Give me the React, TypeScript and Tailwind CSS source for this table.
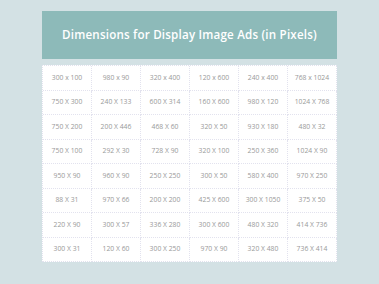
const rows: string[][] = [
  ["300 x 100", "980 x 90", "320 x 400", "120 x 600", "240 x 400", "768 x 1024"],
  ["750 X 300", "240 X 133", "600 X 314", "160 X 600", "980 X 120", "1024 X 768"],
  ["750 X 200", "200 X 446", "468 X 60", "320 X 50", "930 X 180", "480 X 32"],
  ["750 X 100", "292 X 30", "728 X 90", "320 X 100", "250 X 360", "1024 X 90"],
  ["950 X 90", "960 X 90", "250 X 250", "300 X 50", "580 X 400", "970 X 250"],
  ["88 X 31", "970 X 66", "200 X 200", "425 X 600", "300 X 1050", "375 X 50"],
  ["220 X 90", "300 X 57", "336 X 280", "300 X 600", "480 X 320", "414 X 736"],
  ["300 X 31", "120 X 60", "300 X 250", "970 X 90", "320 X 480", "736 X 414"],
];

export default function App() {
  return (
    <div
      className="w-[379px] h-[284px] bg-[#d3e1e4] flex justify-center pt-[11px]"
      style={{ fontFamily: '"Open Sans", "Liberation Sans", sans-serif' }}
    >
      <div className="w-[295px] flex flex-col">
        <div className="h-[48px] bg-[#8dbab9] flex items-center justify-center">
          <h1 className="text-white text-[11.6px] font-semibold tracking-[0.2px]">
            Dimensions for Display Image Ads (in Pixels)
          </h1>
        </div>
        <div className="mt-[6px] grid grid-cols-6 bg-white border-l border-t border-dotted border-[#e2e2ee]">
          {rows.flat().map((cell, i) => (
            <div
              key={i}
              className="h-[24.5px] flex items-center justify-center border-r border-b border-dotted border-[#e2e2ee] text-[6.8px] text-[#999999]"
            >
              {cell}
            </div>
          ))}
        </div>
      </div>
    </div>
  );
}
